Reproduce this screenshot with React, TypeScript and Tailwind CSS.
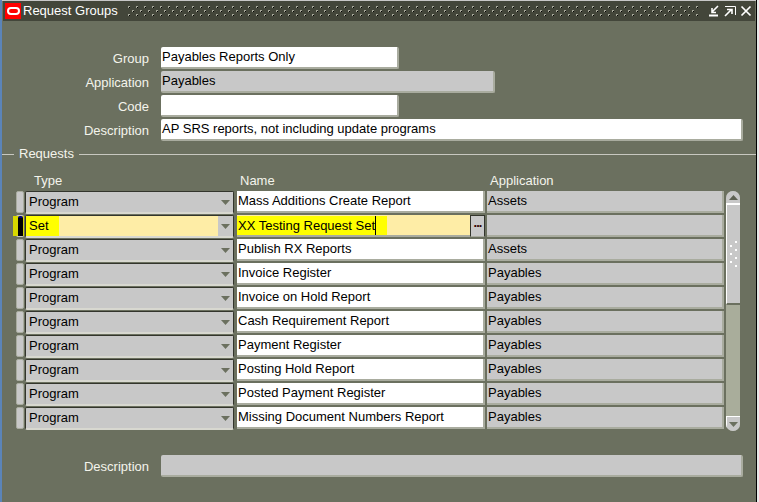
import React from "react";

const rows: [string, string, string][] = [
  ["Program", "Mass Additions Create Report", "Assets"],
  ["Set", "XX Testing Request Set", ""],
  ["Program", "Publish RX Reports", "Assets"],
  ["Program", "Invoice Register", "Payables"],
  ["Program", "Invoice on Hold Report", "Payables"],
  ["Program", "Cash Requirement Report", "Payables"],
  ["Program", "Payment Register", "Payables"],
  ["Program", "Posting Hold Report", "Payables"],
  ["Program", "Posted Payment Register", "Payables"],
  ["Program", "Missing Document Numbers Report", "Payables"],
];

function Field({ label, value, width, gray }: { label: string; value: string; width: string; gray?: boolean }) {
  return (
    <div className="flex h-[24px] items-start">
      <div className="w-[149px] h-[21px] leading-[23px] text-right text-[13px] text-[#f4f4ec]">{label}</div>
      <div
        className={`ml-[12px] h-[22px] pl-[1px] leading-[20px] text-[13px] text-black border-b-2 border-r-2 border-[#a9ac9f] rounded-[2px] ${width} ${gray ? "bg-[#c8c8c8]" : "bg-white"}`}
      >
        {value}
      </div>
    </div>
  );
}

function Arrow() {
  return (
    <svg width="9" height="5" viewBox="0 0 9 5" className="shrink-0">
      <path d="M0 0H9L4.5 5Z" fill="#6b705f" />
    </svg>
  );
}

function Row({ type, name, app, active }: { type: string; name: string; app: string; active: boolean }) {
  return (
    <div className="flex h-[24px] items-start">
      {active ? (
        <div className="relative w-[8px] h-[22px] mr-[1px] bg-[#c8c8c8] rounded-[2px] flex justify-center">
          <div className="absolute left-[-3px] top-[1px] w-[11px] h-[20px] bg-[#d8d800]" />
          <div className="relative w-[5px] h-[20px] mt-[1px] bg-black rounded-t-[2px] border-t-2 border-[#000080]" />
        </div>
      ) : (
        <div className="w-[8px] h-[22px] mr-[1px] bg-[#c8c8c8] border border-[#a9ac9f] rounded-[2px]" />
      )}
      <div
        className={`w-[209px] h-[23px] flex items-center justify-between border border-[#33352c] border-b-2 border-b-[#d8d8d0] rounded-[2px] text-[13px] text-black ${active ? "bg-[#feeda6]" : "bg-[#c8c8c8]"}`}
      >
        <span className="pl-[3px] leading-[20px]">
          {active ? <span className="bg-[#ffff00] pr-[10px] inline-block -ml-[3px] pl-[3px]">{type}</span> : type}
        </span>
        <span className="w-[15px] h-full flex items-center justify-center bg-[#c8c8c8]">
          <Arrow />
        </span>
      </div>
      {active ? (
        <div className="ml-[3px] w-[248px] h-[22px] flex">
          <div className="w-[233px] h-[22px] bg-[#feeda6] border-b-2 border-[#a9ac9f] text-[13px] leading-[20px] text-black">
            <span className="inline-block bg-[#ffff00] pl-[1px] pr-[12px] h-[19px] mt-[1px] leading-[19px] relative">
              {name}
              <span className="absolute right-[11px] top-0 w-px h-[19px] bg-black" />
            </span>
          </div>
          <div className="w-[15px] h-[22px] bg-[#c8c8c8] border border-[#33352c] border-b-[#a9ac9f] text-center text-[13px] leading-[13px] font-bold text-[#300] tracking-[-1px]">
            ...
          </div>
        </div>
      ) : (
        <div className="ml-[3px] w-[248px] h-[22px] pl-[1px] bg-white border-b-2 border-r-2 border-[#a9ac9f] text-[13px] leading-[20px] text-black">
          {name}
        </div>
      )}
      <div className="ml-[2px] w-[237px] h-[22px] pl-[1px] bg-[#c8c8c8] border-b-2 border-r-2 border-[#a9ac9f] text-[13px] leading-[20px] text-black">
        {app}
      </div>
    </div>
  );
}

function Scrollbar() {
  return (
    <div className="ml-[2px] w-[14px] h-[240px] flex flex-col bg-[#a9ad9b] rounded-t-[7px] rounded-b-[7px] overflow-hidden">
      <div className="h-[14px] bg-[#c8c8c8] border-b-2 border-white flex items-center justify-center">
        <svg width="9" height="5" viewBox="0 0 9 5"><path d="M0 5H9L4.5 0Z" fill="#5d6152" /></svg>
      </div>
      <div className="h-[100px] bg-[#c8c8c8] border-l border-white border-b-2 border-b-[#6b705f] flex items-center justify-center">
        <svg width="10" height="30" viewBox="0 0 10 30">
          {[[6, 2], [1, 6], [6, 10], [1, 14], [6, 18], [1, 22], [6, 26]].map(([x, y], i) => (
            <rect key={i} x={x} y={y} width="2" height="2" fill="#fff" />
          ))}
        </svg>
      </div>
      <div className="flex-1" />
      <div className="h-[15px] bg-[#c8c8c8] border-t border-l border-white flex items-center justify-center">
        <Arrow />
      </div>
    </div>
  );
}

export default function App() {
  return (
    <div className="w-[759px] h-[502px] bg-[#e8e8e8] overflow-hidden">
      <div
        className="w-[757px] h-[502px] bg-[#6b705f] border-l-2 border-l-[#5b84b8] border-r border-r-black overflow-hidden flex flex-col"
        style={{ fontFamily: '"Liberation Sans", Arial, sans-serif' }}
      >
        <div className="h-[1px] bg-[#c8c8c8]" />
        <div className="h-[20px] ml-[1px] mr-px bg-[#43463a] flex items-center pl-[2px]">
          <div className="w-[16px] h-[16px] bg-[#ff0000] flex items-center justify-center">
            <div className="w-[13px] h-[8px] rounded-[4px] border-2 border-white" />
          </div>
          <span className="ml-[2px] text-[13px] text-white whitespace-nowrap">Request Groups</span>
          <svg className="ml-[9px] flex-1" height="14">
            <defs>
              <pattern id="dots" width="8" height="8" patternUnits="userSpaceOnUse">
                <rect x="1" y="2" width="2" height="2" fill="#a4a698" />
                <rect x="2" y="3" width="1" height="1" fill="#000" />
                <rect x="5" y="6" width="2" height="2" fill="#a4a698" />
                <rect x="6" y="7" width="1" height="1" fill="#000" />
              </pattern>
            </defs>
            <rect width="100%" height="12" fill="url(#dots)" />
          </svg>
          <svg className="ml-[3px] shrink-0" width="52" height="16" viewBox="0 0 52 16" fill="none" stroke="#fff">
            <path d="M6 12.5H15" strokeWidth="2" />
            <path d="M15 3L9.5 8.5M9 5V9.5H13" strokeWidth="1.6" />
            <path d="M22 3.5H32.5V12" strokeWidth="1" />
            <path d="M22 13L28 7M24 6.5H29V11" strokeWidth="1.6" />
            <path d="M38.5 3.5L47.5 12.5M47.5 3.5L38.5 12.5" strokeWidth="1.7" />
          </svg>
        </div>

        <div className="mt-[26px] ml-[-2px] flex flex-col">
          <Field label="Group" value="Payables Reports Only" width="w-[238px]" />
          <Field label="Application" value="Payables" width="w-[334px]" gray />
          <Field label="Code" value="" width="w-[238px]" />
          <Field label="Description" value="AP SRS reports, not including update programs" width="w-[582px]" />
        </div>

        <div className="mt-[-1px] h-[24px] flex items-center">
          <div className="w-[12px] h-px bg-[#c8c8c0]" />
          <span className="px-[5px] text-[13px] text-[#f4f4ec]">Requests</span>
          <div className="flex-1 h-px bg-[#c8c8c0]" />
        </div>

        <div className="mt-[8px] ml-[14px] flex text-[13px] leading-[14px] text-[#f4f4ec] h-[17px]">
          <div className="w-[18px]" />
          <div className="w-[206px]">Type</div>
          <div className="w-[250px]">Name</div>
          <div>Application</div>
        </div>

        <div className="ml-[14px] flex items-start">
          <div className="flex flex-col">
            {rows.map((r, i) => (
              <Row key={i} type={r[0]} name={r[1]} app={r[2]} active={i === 1} />
            ))}
          </div>
          <Scrollbar />
        </div>

        <div className="mt-[24px] ml-[-2px]">
          <Field label="Description" value="" width="w-[582px]" gray />
        </div>
      </div>
    </div>
  );
}
